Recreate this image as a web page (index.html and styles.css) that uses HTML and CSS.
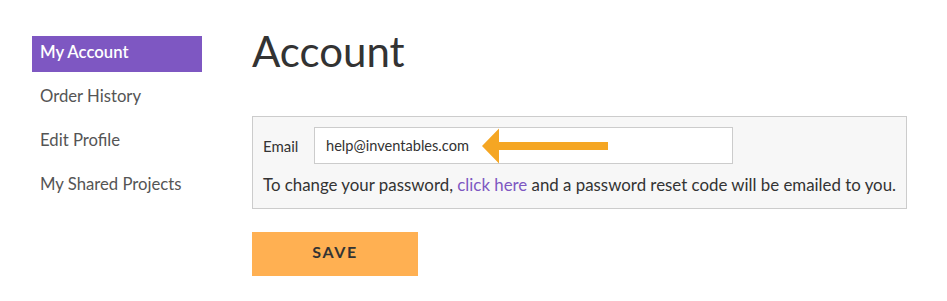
FILE: index.html
```html
<!DOCTYPE html>
<html>
<head>
<meta charset="utf-8">
<link rel="stylesheet" href="styles.css">
</head>
<body>
<div class="page">
  <nav class="sidebar">
    <a class="nav-item active">My Account</a>
    <a class="nav-item">Order History</a>
    <a class="nav-item">Edit Profile</a>
    <a class="nav-item">My Shared Projects</a>
  </nav>
  <main class="main">
    <h1 class="title">Account</h1>
    <div class="panel">
      <div class="row">
        <label class="label">Email</label>
        <div class="input-wrap">
          <div class="input">help@inventables.com</div>
          <svg class="arrow" width="127" height="36" viewBox="0 0 127 36"><polygon points="0,18 17,0.5 17,14 126,14 126,22 17,22 17,35.5" fill="#f5a623"/></svg>
        </div>
      </div>
      <p class="note">To change your password, <a class="link">click here</a> and a password reset code will be emailed to you.</p>
    </div>
    <button class="save">SAVE</button>
  </main>
</div>
</body>
</html>
```
FILE: styles.css
```css
* { box-sizing: border-box; }
body { margin: 0; background: #fff; font-family: Lato, "Open Sans", sans-serif; color: #333; }
.page { display: flex; align-items: flex-start; }
.sidebar { margin-left: 32px; width: 170px; padding-top: 36px; display: flex; flex-direction: column; gap: 8px; }
.nav-item { display: block; height: 36px; padding: 6px 8px 10px; font-size: 16.7px; line-height: 20px; color: #555; text-decoration: none; }
.nav-item.active { background: #7e57c2; color: #fff; font-weight: 600; }
.main { margin-left: 50px; width: 655px; padding-top: 26px; }
.title { margin: 0; font-size: 42px; line-height: 50px; font-weight: 400; color: #333; }
.panel { margin-top: 40px; border: 1px solid #cccccc; background: #f7f7f7; padding: 10px 6px 11px 10px; }
.row { display: flex; align-items: center; }
.label { width: 51px; font-size: 15px; color: #333; }
.input-wrap { position: relative; }
.input { width: 419px; height: 37px; border: 1px solid #cccccc; background: #fff; padding: 0 11px; font-size: 14.6px; line-height: 35px; color: #333; }
.arrow { position: absolute; left: 168px; top: 1px; }
.note { margin: 9px 0 0; font-size: 16.85px; line-height: 24px; color: #333; white-space: nowrap; }
.link { color: #7e57c2; text-decoration: none; }
.save { margin-top: 23px; width: 166px; height: 44px; border: 0; background: #ffb052; font-family: Lato, sans-serif; font-weight: 700; font-size: 16px; line-height: 20px; letter-spacing: 1.6px; color: #333; padding: 0 0 4px; }
```
